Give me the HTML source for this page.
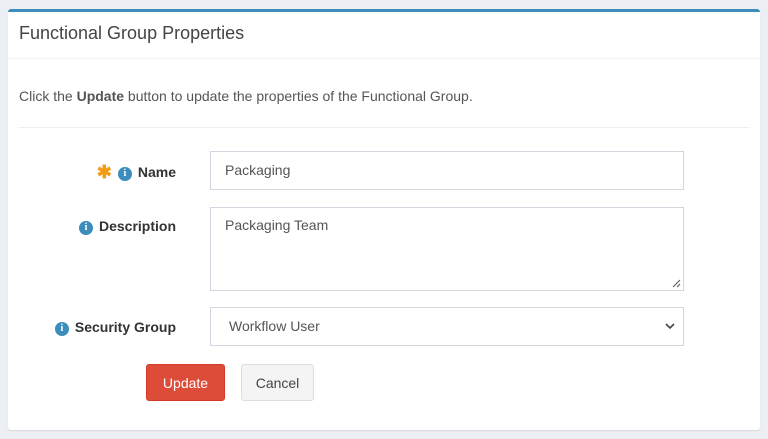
<!DOCTYPE html>
<html><head><style>
body{margin:0;background:#ecf0f5;width:768px;height:439px;font-family:"Liberation Sans",sans-serif;color:#333;position:relative;overflow:hidden}
.box{position:absolute;left:8px;top:9px;width:752px;height:418px;background:#fff;border-top:3px solid #3c8dbc;border-radius:3px;box-shadow:0 1px 1px rgba(0,0,0,.1)}
.hd{position:absolute;left:0;top:0;right:0;height:46px;border-bottom:1px solid #f4f4f4}
.hd span{position:absolute;left:11px;top:11px;font-size:18px;color:#444}
.p{position:absolute;left:11px;top:76px;font-size:14px;color:#555}
.hr{position:absolute;left:11px;right:11px;top:115px;border-top:1px solid #eee}
.lab{position:absolute;right:584px;font-size:14px;font-weight:bold;color:#333;white-space:nowrap}
.i{display:inline-block;width:14px;height:14px;border-radius:50%;background:#3c8dbc;color:#fff;font-size:10px;line-height:14px;text-align:center;font-family:"Liberation Serif",serif;font-weight:bold;vertical-align:1px;margin-right:6px}
.st{color:#f39c12;font-size:18px;margin-right:6px;vertical-align:-1px}
.in{position:absolute;left:202px;width:474px;border:1px solid #d2d6de;font-size:14px;color:#555;box-sizing:border-box;padding-left:14px}
.btn{position:absolute;top:352px;height:37px;font-size:14px;line-height:37px;text-align:center;border-radius:3px;box-sizing:border-box}
</style></head><body>
<div class="box">
<div class="hd"><span>Functional Group Properties</span></div>
<div class="p">Click the <b>Update</b> button to update the properties of the Functional Group.</div>
<div class="hr"></div>
<div class="lab" style="top:150px"><span class="st">✱</span><span class="i">i</span>Name</div>
<div class="in" style="top:139px;height:39px;line-height:37px">Packaging</div>
<div class="lab" style="top:206px"><span class="i">i</span>Description</div>
<div class="in" style="top:195px;height:84px;padding-top:9px">Packaging Team<svg style="position:absolute;right:2px;bottom:2px" width="9" height="9" viewBox="0 0 9 9"><path d="M8 1L1 8M8 5L5 8" stroke="#555" stroke-width="1"/></svg></div>
<div class="lab" style="top:307px"><span class="i">i</span>Security Group</div>
<div class="in" style="top:295px;height:39px;line-height:37px;padding-left:18px">Workflow User<svg style="position:absolute;right:8px;top:15px" width="10" height="7" viewBox="0 0 10 7"><path d="M1 1l4 4 4-4" stroke="#444" stroke-width="1.6" fill="none"/></svg></div>
<div class="btn" style="left:138px;width:79px;background:#dd4b39;color:#fff;border:1px solid #d73925">Update</div>
<div class="btn" style="left:233px;width:73px;background:#f4f4f4;color:#444;border:1px solid #ddd">Cancel</div>
</div>
</body></html>
